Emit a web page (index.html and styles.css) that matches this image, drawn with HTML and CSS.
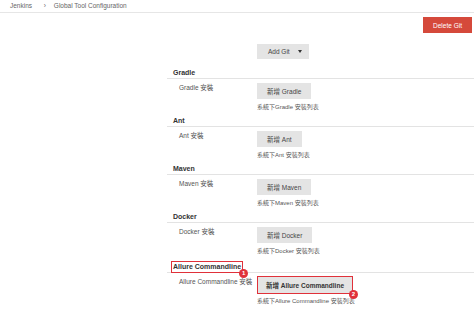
FILE: index.html
```html
<!DOCTYPE html>
<html lang="zh-TW">
<head>
    <meta charset="UTF-8">
    <title>Global Tool Configuration</title>
    <link rel="stylesheet" href="styles.css">
</head>
<body>
    <div class="breadcrumb">
        <span>Jenkins</span>
        <span class="sep">›</span>
        <span>Global Tool Configuration</span>
    </div>

    <div class="top-actions">
        <button class="delete-button">Delete Git</button>
    </div>

    <div class="add-row">
        <button class="add-button">Add Git <span class="caret"></span></button>
    </div>

    <div class="sections">
        <div class="section">
            <div class="section-header"><span>Gradle</span></div>
            <div class="section-body">
                <div class="label">Gradle 安裝</div>
                <div class="field">
                    <button class="tool-button">新增 Gradle</button>
                    <div class="desc">系統下Gradle 安裝列表</div>
                </div>
            </div>
        </div>
        <div class="section">
            <div class="section-header"><span>Ant</span></div>
            <div class="section-body">
                <div class="label">Ant 安裝</div>
                <div class="field">
                    <button class="tool-button">新增 Ant</button>
                    <div class="desc">系統下Ant 安裝列表</div>
                </div>
            </div>
        </div>
        <div class="section">
            <div class="section-header"><span>Maven</span></div>
            <div class="section-body">
                <div class="label">Maven 安裝</div>
                <div class="field">
                    <button class="tool-button">新增 Maven</button>
                    <div class="desc">系統下Maven 安裝列表</div>
                </div>
            </div>
        </div>
        <div class="section">
            <div class="section-header"><span>Docker</span></div>
            <div class="section-body">
                <div class="label">Docker 安裝</div>
                <div class="field">
                    <button class="tool-button">新增 Docker</button>
                    <div class="desc">系統下Docker 安裝列表</div>
                </div>
            </div>
        </div>
        <div class="section last">
            <div class="section-header">
                <span class="marked">Allure Commandline<span class="badge">1</span></span>
            </div>
            <div class="section-body">
                <div class="label">Allure Commandline 安裝</div>
                <div class="field">
                    <span class="marked marked-button">
                        <button class="tool-button strong">新增 Allure Commandline</button>
                        <span class="badge">2</span>
                    </span>
                    <div class="desc">系統下Allure Commandline 安裝列表</div>
                </div>
            </div>
        </div>
    </div>
</body>
</html>
```

FILE: styles.css
```css
body {
    margin: 0;
    padding: 0;
    background-color: #fff;
    font-family: "Liberation Sans", "Noto Sans CJK TC", sans-serif;
    font-size: 6.5px;
    color: #555;
    overflow: hidden;
}

button {
    font-family: inherit;
    font-size: 6.5px;
    border: none;
    cursor: pointer;
    padding: 0 10px;
}

.breadcrumb {
    height: 12px;
    line-height: 12px;
    padding-left: 10px;
    border-bottom: 1px solid #e6e6e6;
    color: #666;
}

.breadcrumb .sep {
    margin: 0 6px 0 10px;
}

.top-actions {
    display: flex;
    justify-content: flex-end;
    padding: 4px 2px 0 0;
}

.delete-button {
    width: 49px;
    height: 16px;
    background-color: #d5493b;
    color: #fff;
    padding: 0;
}

.add-row {
    padding-left: 257px;
    margin-top: 11px;
}

.add-button {
    height: 15px;
    width: 52px;
    background-color: #e4e4e4;
    color: #444;
    display: flex;
    align-items: center;
    justify-content: space-between;
    padding: 0 7px 0 11px;
}

.caret {
    width: 0;
    height: 0;
    border-left: 2.5px solid transparent;
    border-right: 2.5px solid transparent;
    border-top: 3px solid #333;
}

.sections {
    margin-left: 167px;
    margin-top: 9px;
}

.section.last {
    margin-top: 2px;
}

.section-header {
    height: 10px;
    line-height: 10px;
    padding-left: 6px;
    border-bottom: 1px solid #e3e3e3;
    font-size: 7px;
    font-weight: bold;
    color: #333;
}

.section-body {
    display: flex;
    padding: 4px 0 4px 12px;
}

.label {
    width: 78px;
    line-height: 9px;
    color: #555;
}

.field {
    display: flex;
    flex-direction: column;
    align-items: flex-start;
}

.tool-button {
    height: 16px;
    background-color: #e4e4e4;
    color: #444;
}

.tool-button.strong {
    color: #333;
    font-weight: bold;
    padding: 0 8px;
}

.desc {
    margin-top: 3px;
    line-height: 10px;
    font-size: 6px;
    color: #555;
}

.marked {
    position: relative;
    display: inline-block;
    outline: 1.5px solid #e0313a;
    line-height: 10px;
}

.section-header .marked {
    padding: 0 1px;
    margin-left: -1px;
}

.marked-button {
    line-height: 0;
    margin-left: 1px;
}

.badge {
    position: absolute;
    right: -6px;
    bottom: -6px;
    width: 9px;
    height: 9px;
    border-radius: 50%;
    background-color: #e0313a;
    color: #fff;
    font-size: 6px;
    font-weight: bold;
    line-height: 9px;
    text-align: center;
}
```
